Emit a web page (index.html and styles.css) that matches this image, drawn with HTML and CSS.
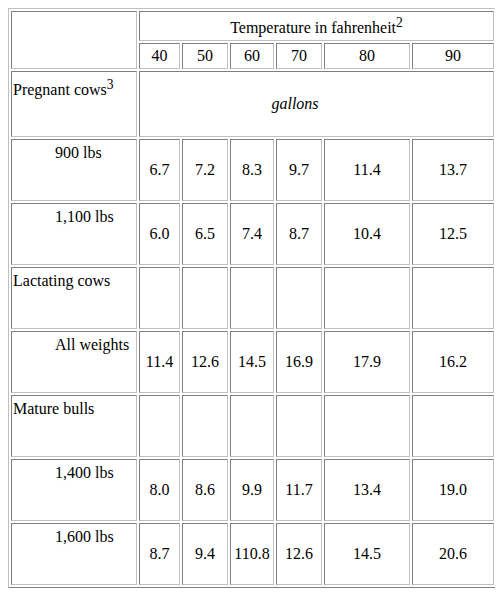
FILE: index.html
```html
<!DOCTYPE html>
<html>
<head>
<meta charset="utf-8">
<link rel="stylesheet" href="styles.css">
</head>
<body>
<table class="water">
  <colgroup>
    <col class="c-label">
    <col class="c-40">
    <col class="c-50">
    <col class="c-60">
    <col class="c-70">
    <col class="c-80">
    <col class="c-90">
  </colgroup>
  <tr class="r-head1">
    <td rowspan="2"></td>
    <td colspan="6" class="mid">Temperature in fahrenheit<sup>2</sup></td>
  </tr>
  <tr class="r-head2">
    <td class="mid">40</td>
    <td class="mid">50</td>
    <td class="mid">60</td>
    <td class="mid">70</td>
    <td class="mid">80</td>
    <td class="mid">90</td>
  </tr>
  <tr class="r-group1">
    <td class="group group-sup">Pregnant cows<sup>3</sup></td>
    <td colspan="6" class="unit">gallons</td>
  </tr>
  <tr class="r-data">
    <td class="sub">900 lbs</td>
    <td class="num">6.7</td><td class="num">7.2</td><td class="num">8.3</td><td class="num">9.7</td><td class="num">11.4</td><td class="num">13.7</td>
  </tr>
  <tr class="r-data">
    <td class="sub">1,100 lbs</td>
    <td class="num">6.0</td><td class="num">6.5</td><td class="num">7.4</td><td class="num">8.7</td><td class="num">10.4</td><td class="num">12.5</td>
  </tr>
  <tr class="r-data">
    <td class="group">Lactating cows</td>
    <td></td><td></td><td></td><td></td><td></td><td></td>
  </tr>
  <tr class="r-data">
    <td class="sub">All weights</td>
    <td class="num">11.4</td><td class="num">12.6</td><td class="num">14.5</td><td class="num">16.9</td><td class="num">17.9</td><td class="num">16.2</td>
  </tr>
  <tr class="r-data">
    <td class="group">Mature bulls</td>
    <td></td><td></td><td></td><td></td><td></td><td></td>
  </tr>
  <tr class="r-data">
    <td class="sub">1,400 lbs</td>
    <td class="num">8.0</td><td class="num">8.6</td><td class="num">9.9</td><td class="num">11.7</td><td class="num">13.4</td><td class="num">19.0</td>
  </tr>
  <tr class="r-data">
    <td class="sub">1,600 lbs</td>
    <td class="num">8.7</td><td class="num">9.4</td><td class="num">110.8</td><td class="num">12.6</td><td class="num">14.5</td><td class="num">20.6</td>
  </tr>
</table>
</body>
</html>
```
FILE: styles.css
```css
html, body {
  background: #ffffff;
}
body {
  margin: 8px;
  font-family: "Liberation Serif", "Times New Roman", serif;
  font-size: 16px;
  color: #000000;
}
.water {
  width: 489px;
  table-layout: fixed;
  border-collapse: separate;
  border-spacing: 2px;
  border: 1px solid;
  border-color: #c0c0c0 #808080 #808080 #c0c0c0;
}
.water td {
  padding: 1px;
  border: 1px solid;
  border-color: #808080 #c0c0c0 #c0c0c0 #808080;
  vertical-align: middle;
}
.c-label { width: 126px; }
.c-40 { width: 41px; }
.c-50 { width: 46px; }
.c-60 { width: 44px; }
.c-70 { width: 46px; }
.c-80 { width: 86px; }
.c-90 { width: 82px; }
.r-head1 { height: 30px; }
.r-head2 { height: 26px; }
.r-group1 { height: 66px; }
.r-data { height: 62px; }
.water td.mid,
.water td.num {
  text-align: center;
}
.water td.group {
  vertical-align: top;
  text-align: left;
  padding-top: 4px;
}
.water td.group-sup {
  padding-top: 5px;
}
.water td.sub {
  vertical-align: top;
  text-align: left;
  padding-left: 43px;
  padding-top: 4px;
}
.water td.unit {
  text-align: center;
  padding-right: 44px;
  font-style: italic;
}
sup {
  font-size: 0.85em;
}
```
